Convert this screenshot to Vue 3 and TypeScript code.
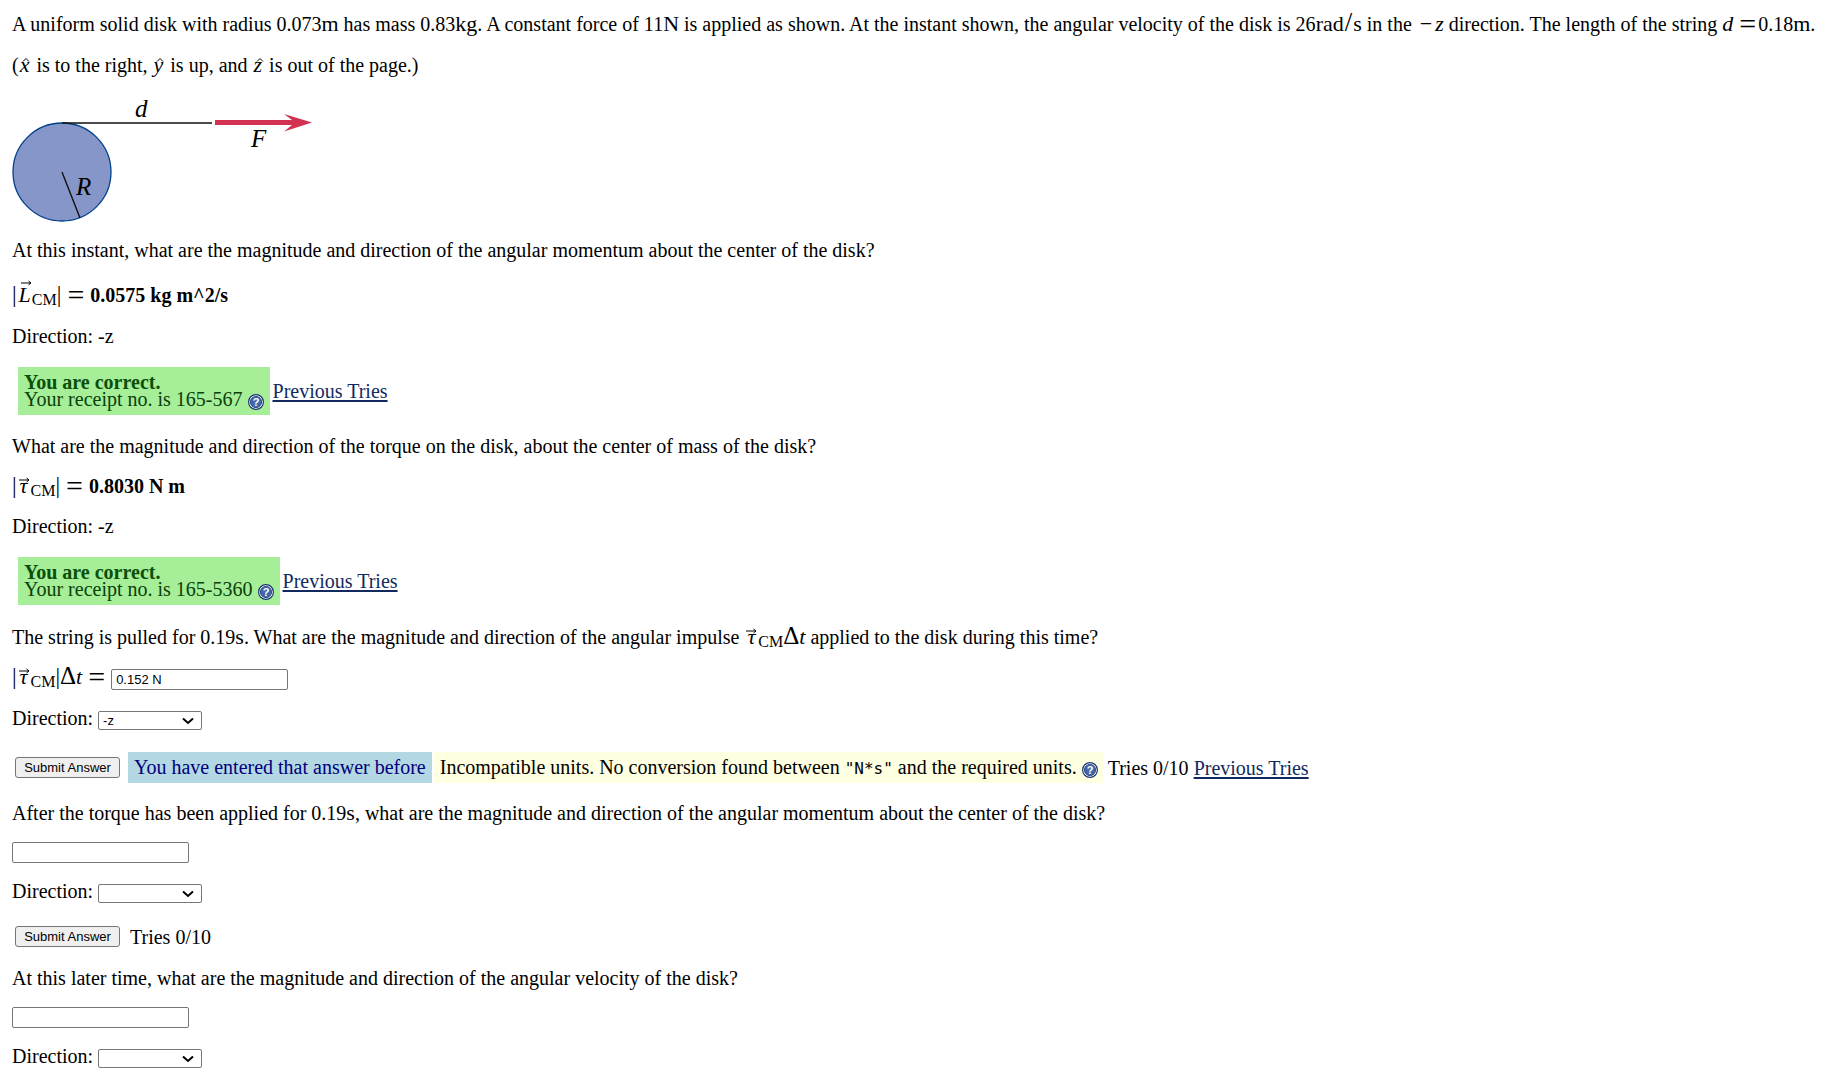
<script setup lang="ts">
import { ref } from 'vue'

const impulse = ref('0.152 N')
const impulseDirection = ref('-z')
const momentum = ref('')
const momentumDirection = ref('')
const velocity = ref('')
const velocityDirection = ref('')
const directions: string[] = ['', '+x', '-x', '+y', '-y', '+z', '-z']
</script>

<template>
  <main class="problem">
    <p class="row">
      A uniform solid disk with radius 0.073<span class="unit">m</span> has mass 0.83<span class="unit">kg</span>. A constant force of 11<span class="unit">N</span> is applied as shown. At the instant shown, the angular velocity of the disk is 26<span class="unit">rad<span class="slash">/</span>s</span> in the <span class="minus">−</span><i class="var">z</i> direction. The length of the string <i class="var">d</i> <span class="eq tight">=</span>0.18<span class="unit">m</span>.
    </p>
    <p class="row">
      (<i class="var hat">x<svg class="accent" viewBox="0 0 12 6"><path d="M3 4.500 6 1.500 9 4.500" /></svg></i> is to the right,
      <i class="var hat">y<svg class="accent" viewBox="0 0 12 6"><path d="M3 4.500 6 1.500 9 4.500" /></svg></i> is up, and
      <i class="var hat">z<svg class="accent" viewBox="0 0 12 6"><path d="M3 4.500 6 1.500 9 4.500" /></svg></i> is out of the page.)
    </p>

    <svg class="figure" viewBox="0 0 304 123" role="img" aria-label="Disk of radius R pulled by force F through a string of length d">
      <circle cx="50" cy="75" r="49" fill="#8696c8" stroke="#00408c" stroke-width="1.300" />
      <path d="M50 26H200M50 75 68 121" stroke="#111" stroke-width="1.400" fill="none" />
      <path d="M203 23H280L272 17 300 25.500 272 34.500 280 28H203Z" fill="#d33152" />
      <text x="123" y="20">d</text>
      <text x="239" y="50">F</text>
      <text x="64" y="98">R</text>
    </svg>

    <p class="row">At this instant, what are the magnitude and direction of the angular momentum about the center of the disk?</p>
    <p class="row vector">
      <span class="bar">|</span><i class="var hat cap">L<svg class="accent" viewBox="0 0 12 6"><path d="M1 3H11M8.500 1 11 3 8.500 5" /></svg></i><span class="sub">CM</span><span class="bar">|</span> <span class="eq">=</span> <b>0.0575 kg m^2/s</b>
    </p>
    <p class="row">Direction: -z</p>
    <div class="row result">
      <div class="correct">
        <b>You are correct.</b><br />Your receipt no. is 165-567
        <a class="help" href="#" aria-label="Help"><svg viewBox="0 0 16 16"><circle cx="8" cy="8" r="7.400" fill="#fff" stroke="#17346f" stroke-width="1.200" /><circle cx="8" cy="8" r="5.600" fill="#4268ac" stroke="#17346f" stroke-width=".8" /><text x="8" y="12">?</text></svg></a>
      </div>
      <a href="#">Previous Tries</a>
    </div>

    <p class="row low">What are the magnitude and direction of the torque on the disk, about the center of mass of the disk?</p>
    <p class="row torque">
      <span class="bar">|</span><i class="var hat tau">τ<svg class="accent" viewBox="0 0 12 6"><path d="M1 3H11M8.500 1 11 3 8.500 5" /></svg></i><span class="sub">CM</span><span class="bar">|</span> <span class="eq">=</span> <b>0.8030 N m</b>
    </p>
    <p class="row">Direction: -z</p>
    <div class="row result">
      <div class="correct">
        <b>You are correct.</b><br />Your receipt no. is 165-5360
        <a class="help" href="#" aria-label="Help"><svg viewBox="0 0 16 16"><circle cx="8" cy="8" r="7.400" fill="#fff" stroke="#17346f" stroke-width="1.200" /><circle cx="8" cy="8" r="5.600" fill="#4268ac" stroke="#17346f" stroke-width=".8" /><text x="8" y="12">?</text></svg></a>
      </div>
      <a href="#">Previous Tries</a>
    </div>

    <p class="row raised">
      The string is pulled for 0.19<span class="unit">s</span>. What are the magnitude and direction of the angular impulse <i class="var hat tau">τ<svg class="accent" viewBox="0 0 12 6"><path d="M1 3H11M8.500 1 11 3 8.500 5" /></svg></i><span class="sub">CM</span><span class="delta">Δ</span><i class="var">t</i> applied to the disk during this time?
    </p>
    <div class="row field">
      <label for="impulse"><span class="bar">|</span><i class="var hat tau">τ<svg class="accent" viewBox="0 0 12 6"><path d="M1 3H11M8.500 1 11 3 8.500 5" /></svg></i><span class="sub">CM</span><span class="bar">|</span><span class="delta">Δ</span><i class="var">t</i> <span class="eq">=</span></label>
      <input id="impulse" v-model="impulse" type="text" />
    </div>
    <div class="row field">
      <label for="impulse-direction">Direction:</label>
      <span class="picker"><select id="impulse-direction" v-model="impulseDirection">
        <option v-for="d in directions" :key="d" :value="d">{{ d }}</option>
      </select><svg viewBox="0 0 12 8"><path d="M1 1.500 6 6 11 1.500" /></svg></span>
    </div>
    <div class="row submit wide">
      <button type="button">Submit Answer</button>
      <span class="notice">You have entered that answer before</span>
      <span class="warning">Incompatible units. No conversion found between <code>"N*s"</code> and the required units.
        <a class="help" href="#" aria-label="Help"><svg viewBox="0 0 16 16"><circle cx="8" cy="8" r="7.400" fill="#fff" stroke="#17346f" stroke-width="1.200" /><circle cx="8" cy="8" r="5.600" fill="#4268ac" stroke="#17346f" stroke-width=".8" /><text x="8" y="12">?</text></svg></a></span>
      <span class="tries">Tries 0/10 <a href="#">Previous Tries</a></span>
    </div>

    <p id="momentum-question" class="row low">After the torque has been applied for 0.19<span class="unit">s</span>, what are the magnitude and direction of the angular momentum about the center of the disk?</p>
    <div class="row entry">
      <input v-model="momentum" type="text" aria-labelledby="momentum-question" />
    </div>
    <div class="row field">
      <label for="momentum-direction">Direction:</label>
      <span class="picker"><select id="momentum-direction" v-model="momentumDirection">
        <option v-for="d in directions" :key="d" :value="d">{{ d }}</option>
      </select><svg viewBox="0 0 12 8"><path d="M1 1.500 6 6 11 1.500" /></svg></span>
    </div>
    <div class="row submit">
      <button type="button">Submit Answer</button>
      <span class="tries first">Tries 0/10</span>
    </div>

    <p id="velocity-question" class="row low">At this later time, what are the magnitude and direction of the angular velocity of the disk?</p>
    <div class="row entry">
      <input v-model="velocity" type="text" aria-labelledby="velocity-question" />
    </div>
    <div class="row field">
      <label for="velocity-direction">Direction:</label>
      <span class="picker"><select id="velocity-direction" v-model="velocityDirection">
        <option v-for="d in directions" :key="d" :value="d">{{ d }}</option>
      </select><svg viewBox="0 0 12 8"><path d="M1 1.500 6 6 11 1.500" /></svg></span>
    </div>
  </main>
</template>

<style>
body {
  margin: 0;
  background: #fff;
}
</style>

<style scoped>
.problem {
  display: flex;
  flex-direction: column;
  gap: 17px;
  padding: 12px 8px 8px 12px;
  color: #000;
  font-family: "Liberation Serif", "Times New Roman", serif;
  font-size: 20px;
  line-height: 24px;
}
.row {
  margin: 0;
  min-height: 24px;
}
.low {
  min-height: 23px;
  line-height: 23px;
}
.torque {
  min-height: 22px;
  line-height: 22px;
}
.vector {
  padding-top: 4px;
}
.raised {
  padding-bottom: 2px;
}
.figure {
  display: block;
  width: 304px;
  height: 123px;
  margin: 3px 0 1px;
  overflow: visible;
}
.figure text {
  font-size: 25px;
  font-style: italic;
}
a {
  color: #11295e;
  text-decoration-thickness: 2px;
  text-underline-offset: 2px;
}
.unit,
.var {
  font-size: 22px;
  line-height: 1px;
}
.slash {
  margin: 0 1px;
  font-size: 27px;
}
.minus {
  margin: 0 3px;
  font-size: 22px;
  line-height: 1px;
}
.eq {
  margin: 0 1px;
  font-size: 30px;
  line-height: 1px;
  vertical-align: -3px;
}
.eq.tight {
  margin: 0 2px 0 1px;
}
.hat {
  position: relative;
  padding: 0 2px 0 1px;
}
.accent {
  position: absolute;
  top: 5px;
  left: 1px;
  width: 12px;
  height: 6px;
  overflow: visible;
}
.accent path {
  fill: none;
  stroke: #000;
  stroke-width: 1;
}
.cap {
  margin-left: 1px;
  padding: 0 1px;
}
.cap .accent {
  top: -2px;
  left: 2px;
}
.tau {
  padding: 0 3px;
}
.tau .accent {
  top: 4px;
}
.bar {
  font-size: 23px;
  line-height: 1px;
}
.sub {
  position: relative;
  top: 3px;
  font-size: 16px;
  line-height: 1px;
}
.delta {
  font-size: 25px;
  line-height: 1px;
}
.result {
  display: flex;
  align-items: center;
  gap: 3px;
  min-height: 48px;
  padding: 2px 0 3px 6px;
}
.correct {
  box-sizing: border-box;
  height: 48px;
  padding: 7px 6px 0;
  background: #a6ee98;
  color: #0a400a;
  line-height: 17px;
}
.correct b {
  color: #0a500a;
}
.help {
  display: inline-block;
  width: 16px;
  height: 16px;
  vertical-align: -4px;
}
.help svg {
  display: block;
  width: 16px;
  height: 16px;
}
.help text {
  fill: #fff;
  font: bold 11px "Liberation Sans", Arial, sans-serif;
  text-anchor: middle;
}
.field {
  display: flex;
  align-items: baseline;
  gap: 5px;
  height: 26px;
  margin-top: -2px;
  line-height: 22px;
}
.entry {
  display: flex;
  min-height: 23px;
}
input {
  box-sizing: border-box;
  width: 177px;
  height: 21px;
  padding: 1px 4px;
  border: 1px solid #767676;
  border-radius: 2px;
  background: #fff;
  color: #000;
  font: 13px "Liberation Sans", Arial, sans-serif;
}
.picker {
  position: relative;
  display: flex;
  align-items: baseline;
}
select {
  box-sizing: border-box;
  width: 104px;
  height: 19px;
  padding: 0 4px;
  border: 1px solid #767676;
  border-radius: 2px;
  appearance: none;
  background: #fff;
  color: #000;
  font: 13px "Liberation Sans", Arial, sans-serif;
}
.picker svg {
  position: absolute;
  top: 6px;
  right: 8px;
  width: 12px;
  height: 8px;
  pointer-events: none;
}
.picker path {
  fill: none;
  stroke: #000;
  stroke-width: 2;
}
.submit {
  display: flex;
  align-items: center;
  min-height: 23px;
  margin: 2px 0;
  padding-left: 3px;
  line-height: 22px;
}
.wide {
  min-height: 31px;
}
button {
  box-sizing: border-box;
  width: 105px;
  height: 21px;
  padding: 0;
  border: 1px solid #767676;
  border-radius: 3px;
  background: #efefef;
  color: #000;
  font: 13px "Liberation Sans", Arial, sans-serif;
}
.notice,
.warning {
  box-sizing: border-box;
  height: 31px;
  padding: 4px 6px 0;
}
.notice {
  margin-left: 8px;
  background: #b4d7e4;
  color: #00007c;
}
.warning {
  margin-left: 2px;
  background: #ffffe2;
}
.warning code {
  font: 16px "DejaVu Sans Mono", monospace;
  line-height: 1px;
}
.tries {
  margin-left: 4px;
}
.tries.first {
  margin-left: 10px;
}
</style>
